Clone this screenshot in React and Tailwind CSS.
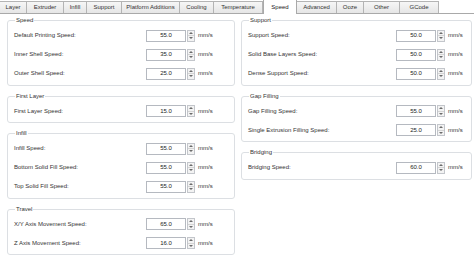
import React from "react";

const tabs = [
  ["Layer", 27],
  ["Extruder", 37],
  ["Infill", 23],
  ["Support", 35],
  ["Platform Additions", 58],
  ["Cooling", 34],
  ["Temperature", 49],
  ["Speed", 34],
  ["Advanced", 40],
  ["Ooze", 27],
  ["Other", 36],
  ["GCode", 39],
];

const left = [
  {
    title: "Speed",
    rows: [
      ["Default Printing Speed:", "55.0"],
      ["Inner Shell Speed:", "35.0"],
      ["Outer Shell Speed:", "25.0"],
    ],
  },
  { title: "First Layer", rows: [["First Layer Speed:", "15.0"]] },
  {
    title: "Infill",
    rows: [
      ["Infill Speed:", "55.0"],
      ["Bottom Solid Fill Speed:", "55.0"],
      ["Top Solid Fill Speed:", "55.0"],
    ],
  },
  {
    title: "Travel",
    rows: [
      ["X/Y Axis Movement Speed:", "65.0"],
      ["Z Axis Movement Speed:", "16.0"],
    ],
  },
];

const right = [
  {
    title: "Support",
    rows: [
      ["Support Speed:", "50.0"],
      ["Solid Base Layers Speed:", "50.0"],
      ["Dense Support Speed:", "50.0"],
    ],
  },
  {
    title: "Gap Filling",
    rows: [
      ["Gap Filling Speed:", "55.0"],
      ["Single Extrusion Filling Speed:", "25.0"],
    ],
  },
  { title: "Bridging", rows: [["Bridging Speed:", "60.0"]] },
];

function SpinBox({ value }) {
  return (
    <div className="flex h-[12px]">
      <div className="flex w-[40px] items-center justify-center border border-[#b5b9c0] bg-white text-[#222]">
        {value}
      </div>
      <div className="ml-[1px] flex w-[8px] flex-col border border-[#c3c6cb] bg-[#f3f3f3]">
        <div className="flex flex-1 items-center justify-center border-b border-[#d4d4d4]">
          <div className="h-0 w-0 border-x-[2px] border-b-[2px] border-x-transparent border-b-[#6b6b6b]" />
        </div>
        <div className="flex flex-1 items-center justify-center">
          <div className="h-0 w-0 border-x-[2px] border-t-[2px] border-x-transparent border-t-[#6b6b6b]" />
        </div>
      </div>
    </div>
  );
}

function Group({ title, rows, unitW }) {
  return (
    <fieldset className="rounded-[3px] border border-[#dcdfe3] px-[6px] pt-[2px] pb-[1.5px]">
      <legend className="ml-[1px] px-[1px] leading-[7px] text-[#333]">{title}</legend>
      {rows.map(([label, value]) => (
        <div key={label} className="flex h-[19px] items-center">
          <span className="flex-1 text-[#333]">{label}</span>
          <SpinBox value={value} />
          <span className={`pl-[3px] text-[#333] ${unitW}`}>mm/s</span>
        </div>
      ))}
    </fieldset>
  );
}

export default function App() {
  return (
    <div className="h-[257px] w-[474px] overflow-hidden bg-white font-['Liberation_Sans',sans-serif] text-[6px]">
      <div className="flex h-[14px] items-end border-b border-[#a9a9a9] bg-white">
        {tabs.map(([name, w]) => {
          const active = name === "Speed";
          return (
            <div
              key={name}
              style={{ width: w }}
              className={
                active
                  ? "-mb-[1px] flex h-[15px] items-center justify-center border-x border-t border-[#a9a9a9] bg-white text-[#222]"
                  : "flex h-[12px] items-center justify-center border-t border-r border-[#b4b4b4] bg-gradient-to-b from-[#f6f6f6] to-[#e6e6e6] text-[#333]"
              }
            >
              {name}
            </div>
          );
        })}
      </div>
      <div className="flex gap-[6px] pl-[7px] pt-[3px]">
        <div className="flex w-[228px] flex-col gap-[7px]">
          {left.map((g) => (
            <Group key={g.title} {...g} unitW="w-[33px]" />
          ))}
        </div>
        <div className="flex w-[231px] flex-col gap-[7px]">
          {right.map((g) => (
            <Group key={g.title} {...g} unitW="w-[20px]" />
          ))}
        </div>
      </div>
    </div>
  );
}
